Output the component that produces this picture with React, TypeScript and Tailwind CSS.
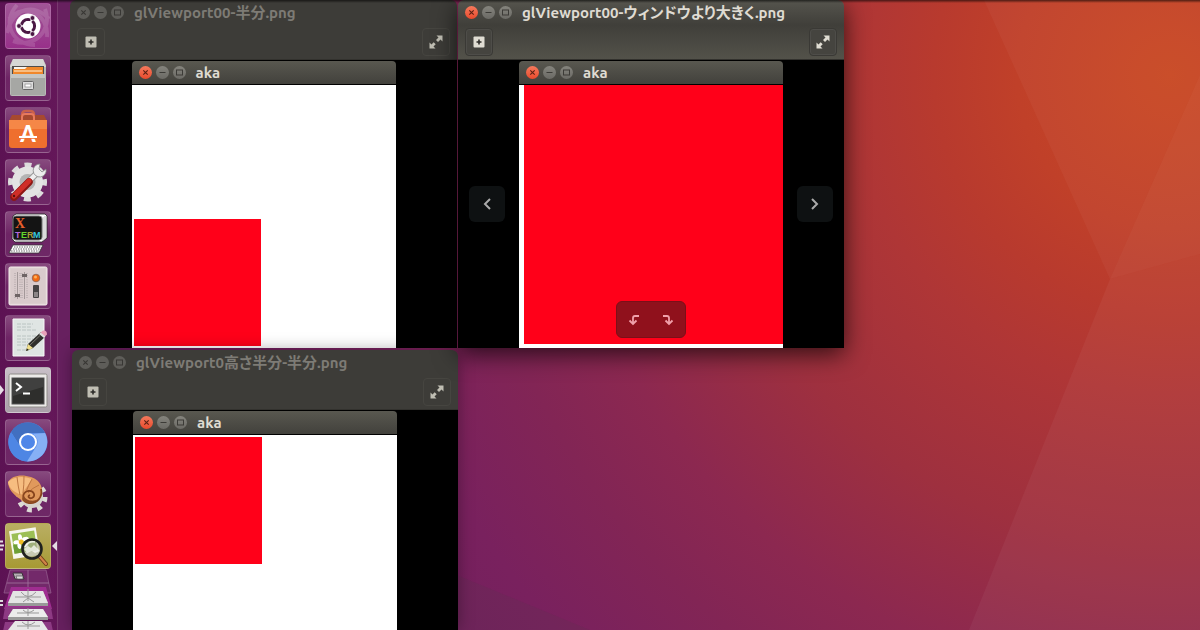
import { ReactNode } from "react";
import clsx from "clsx";

const font =
  "font-['Ubuntu','Noto_Sans','Noto_Sans_CJK_JP',sans-serif]";

const Wallpaper = () => (
  <svg
    className="absolute inset-0 h-full w-full"
    viewBox="0 0 1200 630"
    preserveAspectRatio="none"
    aria-hidden="true"
  >
    <defs>
      <radialGradient id="sky" gradientUnits="userSpaceOnUse" cx="1170" cy="75" r="1180">
        <stop offset="0" stopColor="#c94823" />
        <stop offset="0.13" stopColor="#c04029" />
        <stop offset="0.2" stopColor="#b83a2e" />
        <stop offset="0.27" stopColor="#af3636" />
        <stop offset="0.4" stopColor="#9e303f" />
        <stop offset="0.52" stopColor="#8c2850" />
        <stop offset="0.6" stopColor="#822555" />
        <stop offset="0.7" stopColor="#79215e" />
        <stop offset="1" stopColor="#621c5c" />
      </radialGradient>
    </defs>
    <rect width="1200" height="630" fill="url(#sky)" />
    <path d="M984 0L1110 279L1200 75V0z" fill="#fff" opacity="0.035" />
    <path d="M1200 75L1110 279L1200 254z" fill="#fff" opacity="0.06" />
    <path d="M1110 279L969 630H1200V254z" fill="#fff" opacity="0.045" />
    <path d="M440 568L590 630H440z" fill="#404040" opacity="0.12" />
  </svg>
);

const UbuntuIcon = () => (
  <>
    <path d="M2 30C8 4 30 0 44 16M4 16C20-2 44 12 42 34M12 2C-4 20 8 42 30 42M40 6C48 26 30 46 8 38" fill="none" stroke="#fff" strokeWidth="4" opacity="0.14" />
    <circle cx="23" cy="23" r="12.500" fill="#fff" />
    <circle cx="23" cy="23" r="6.500" fill="none" stroke="#4b1844" strokeWidth="3.200" />
    <path d="M23 23H13M23 23L28.500 32M23 23L28.500 14" stroke="#fff" strokeWidth="1.500" />
    <circle cx="23" cy="23" r="4.900" fill="#fff" />
    <g fill="#4b1844" stroke="#fff" strokeWidth="0.700">
      <circle cx="14" cy="23" r="2.400" />
      <circle cx="27.500" cy="15" r="2.400" />
      <circle cx="27.500" cy="31" r="2.400" />
    </g>
  </>
);

const FilesIcon = () => (
  <>
    <path d="M8 4H38L41 10V39Q41 41 39 41H7Q5 41 5 39V10z" fill="#b9bab7" />
    <path d="M8 4H38L41 12H5z" fill="#d6d7d4" />
    <path d="M7 11H39V19H7z" fill="#4f4d4b" />
    <path d="M9 12H38V15H9z" fill="#f8f4ec" />
    <path d="M8 14H20L22 12H38V19H8z" fill="#f0882b" />
    <path d="M9 16H37" stroke="#fff2d7" />
    <path d="M6 19H40V40H6z" fill="#a6a7a4" />
    <path d="M6 19H40V23H6z" fill="#c5c6c3" />
    <rect x="17.500" y="26.500" width="11" height="8" rx="1" fill="#ddd" stroke="#666" />
    <rect x="20" y="29" width="6" height="3" fill="#fff" stroke="#888" strokeWidth="0.700" />
  </>
);

const SoftwareIcon = () => (
  <>
    <path d="M17 13V8Q17 4 21 4H25Q29 4 29 8V13" fill="none" stroke="#c9604a" strokeWidth="2.600" />
    <path d="M7 8H39L42 14H4z" fill="#a7492f" />
    <path d="M4 13H42V38Q42 41 39 41H7Q4 41 4 38z" fill="#ef6f2e" />
    <path d="M4 13H42V22H4z" fill="#f58747" />
    <path d="M17 13V10Q17 7 20 7H26Q29 7 29 10V13" fill="none" stroke="#e8795d" strokeWidth="2" />
    <text x="23" y="35" textAnchor="middle" fill="#fff" fontSize="22" fontWeight="900" fontFamily="Lato, sans-serif">A</text>
    <path d="M14 30H32" stroke="#fff" strokeWidth="2.200" />
    <path d="M16 31.500H31" stroke="#ef6f2e" strokeWidth="0.800" />
  </>
);

const SettingsIcon = () => (
  <>
    <circle cx="22.500" cy="23" r="17" fill="none" stroke="#dcdcdc" strokeWidth="5" strokeDasharray="7 6.350" strokeDashoffset="3.500" />
    <circle cx="22.500" cy="23" r="11.500" fill="#c4c4c4" stroke="#e3e3e3" strokeWidth="8" />
    <circle cx="22.500" cy="23" r="8" fill="#b4b4b4" />
    <path d="M24 22L32 14" stroke="#999" strokeWidth="6.500" />
    <path d="M24 22L33 13" stroke="#eee" strokeWidth="4.500" />
    <path d="M41 10A6.500 6.500 0 1 1 35 5L34 10L37 13z" fill="#ececec" stroke="#888" strokeWidth="0.800" />
    <path d="M9 38L24 23" stroke="#8d1613" strokeWidth="7.500" strokeLinecap="round" />
    <path d="M9 37L24 22" stroke="#cf2e28" strokeWidth="5" strokeLinecap="round" />
    <circle cx="9" cy="37" r="1.200" fill="#57100e" />
  </>
);

const XtermIcon = () => (
  <>
    <path d="M8 5L11 3H40L42 5V27L37 31H10L7 28z" fill="#fff" stroke="#222" strokeWidth="0.800" />
    <path d="M38 6V30M40 5V28" stroke="#999" strokeWidth="0.700" />
    <rect x="8" y="5" width="29" height="24" rx="3" fill="#141414" stroke="#777" />
    <text x="10" y="17" fill="#e8602c" fontSize="14" fontWeight="700" fontFamily="Liberation Serif, serif">X</text>
    <g fontSize="9" fontWeight="700" fontFamily="Liberation Sans, sans-serif">
      <text x="10" y="27" fill="#b56ade">T</text>
      <text x="16" y="27" fill="#62d62c">E</text>
      <text x="22" y="27" fill="#a5a034">R</text>
      <text x="28" y="27" fill="#32c7de">M</text>
    </g>
    <path d="M8 34H38L34 42H4z" fill="#fff" stroke="#333" strokeWidth="0.800" />
    <path d="M9 36H36M8 38H35M6 40H34" stroke="#555" strokeDasharray="1.500 1" strokeWidth="0.900" />
  </>
);

const MixerIcon = () => (
  <>
    <rect x="4" y="4" width="38" height="38" rx="1.500" fill="#dccfcf" stroke="#f6eeee" />
    <rect x="6" y="6" width="34" height="34" fill="#d9cbcc" />
    <path d="M12.500 9V36M19.500 9V36" stroke="#a39899" />
    <path d="M10 10V35M15 10V35M17 10V35M22 10V35" stroke="#b0a5a6" strokeDasharray="0.700 1.500" strokeWidth="1.500" />
    <rect x="10" y="31" width="5" height="3" fill="#6e6465" />
    <rect x="17" y="11" width="5" height="3" fill="#6e6465" />
    <circle cx="31" cy="15" r="3.800" fill="#f16a12" stroke="#8b6356" strokeWidth="0.800" />
    <circle cx="30.500" cy="14" r="1.500" fill="#ffb15c" />
    <rect x="28" y="22" width="6" height="13" rx="1" fill="#464344" />
    <rect x="29" y="29" width="4" height="5" fill="#8b8586" />
  </>
);

const EditorIcon = () => (
  <>
    <path d="M8 4H39V41H8z" fill="#dfe5e3" stroke="#f8f8f8" />
    <path d="M12 9H28M12 12H26M12 15H32M12 21H31M12 24H28M12 27H23M12 30H24M12 35H21" stroke="#b7bfbe" strokeWidth="0.900" strokeDasharray="4 1" />
    <path d="M21 36L23 29L36 17L41 21L28 33z" fill="#2f302c" />
    <path d="M21 36L23 29L28 33z" fill="#f0df8b" />
    <path d="M21 36L22 33.500L24 35z" fill="#222" />
    <path d="M35 18L38 15.500Q42 15 42 19.500L39.500 22z" fill="#e7a0b8" />
    <path d="M34 19L35.500 17.500L40.500 21.500L39 23z" fill="#ddd" />
    <path d="M25 30L35 20.500" stroke="#77776f" />
  </>
);

const TerminalIcon = () => (
  <>
    <rect x="4" y="7" width="38" height="33" rx="1.500" fill="#ecebe8" stroke="#8f8c88" />
    <rect x="7" y="11" width="32" height="26" fill="#2e2e2c" stroke="#555" />
    <path d="M8 12H38V20L8 29z" fill="#fff" opacity="0.090" />
    <path d="M11 16L16 20L11 24" fill="none" stroke="#fff" strokeWidth="2" />
    <path d="M18 26.500H25" stroke="#fff" strokeWidth="2" />
  </>
);

const ChromiumIcon = () => (
  <>
    <circle cx="23" cy="23" r="19.500" fill="#5c8eea" />
    <path d="M6 13A19.500 19.500 0 0 1 40 14H23A9 9 0 0 0 15 27z" fill="#416fc0" />
    <path d="M6 13A19.500 19.500 0 0 0 22 42.500L30 29A9 9 0 0 1 15 27z" fill="#4e86e4" />
    <path d="M40 14A19.500 19.500 0 0 1 22 42.500L31 28A9 9 0 0 0 28 15z" fill="#86b0f5" />
    <circle cx="23" cy="23" r="9" fill="#fff" />
    <circle cx="23" cy="23" r="7" fill="#4f86e8" />
  </>
);

const ShellIcon = () => (
  <>
    <circle cx="27" cy="26" r="12.500" fill="none" stroke="#dcdad5" strokeWidth="6" strokeDasharray="4.500 5.310" />
    <circle cx="27" cy="26" r="11" fill="#d5d2cc" />
    <path d="M3 11C7 4 17 3 26 6C36 9 40 20 35 27C31 34 20 34 15 28C9 24 3 18 3 11z" fill="#e0995c" />
    <path d="M3 11C9 5 19 5 27 8C24 13 20 18 16 24C9 21 4 17 3 11z" fill="#f6bd80" />
    <path d="M12 6Q13 15 15 24M19 5Q19 14 18 22M27 8Q23 15 21 21M34 14Q27 17 23 22" fill="none" stroke="#b8713c" strokeWidth="0.900" />
    <path d="M36 18C38 26 32 33 24 32C17 31 16 22 23 20C29 19 31 25 27 27C24 28 22 25 25 24" fill="none" stroke="#88451d" strokeWidth="1.800" />
    <path d="M17 28C19 33 29 34 33 28C29 31 21 30 19 25z" fill="#8f4d23" />
  </>
);

const ViewerIcon = () => (
  <>
    <g transform="rotate(-9 20 20)">
      <rect x="6" y="6" width="27" height="28" fill="#f6f6ee" />
      <rect x="8" y="9" width="23" height="20" fill="#9cbf55" />
      <path d="M8 20H31V29H8z" fill="#6e9f37" />
      <g fill="#fff">
        <ellipse cx="16" cy="14" rx="2" ry="3.500" />
        <ellipse cx="21" cy="16" rx="3.500" ry="2" />
        <ellipse cx="12" cy="18" rx="3.500" ry="2" />
        <ellipse cx="20" cy="22" rx="3" ry="2.500" />
        <ellipse cx="14" cy="22" rx="2" ry="3" />
      </g>
      <circle cx="16.500" cy="18.500" r="2.500" fill="#f0bd25" />
    </g>
    <path d="M35 34L41 41" stroke="#6f3c1c" strokeWidth="4" strokeLinecap="round" />
    <path d="M35 34L41 41" stroke="#d08347" strokeWidth="2.200" strokeLinecap="round" />
    <circle cx="27" cy="26" r="9.500" fill="#b3b89a" fillOpacity="0.700" stroke="#20221f" strokeWidth="2.600" />
    <path d="M20 24Q23 18 30 19" fill="none" stroke="#fff" strokeWidth="1.500" opacity="0.800" />
    <path d="M19 26L23 23L26 25L29 22L32 25L35 28L30 30L27 28L22 30z" fill="#fff" opacity="0.700" />
  </>
);

interface LauncherItem {
  name: string;
  icon: ReactNode;
  tile?: string;
  focused?: boolean;
  pips?: number;
}

const items: LauncherItem[] = [
  { name: "Dash", icon: <UbuntuIcon />, tile: "bg-linear-to-b from-[#a05596] to-[#98308a]" },
  { name: "Files", icon: <FilesIcon /> },
  { name: "Software", icon: <SoftwareIcon /> },
  { name: "Settings", icon: <SettingsIcon /> },
  { name: "XTerm", icon: <XtermIcon /> },
  { name: "Mixer", icon: <MixerIcon /> },
  { name: "Text Editor", icon: <EditorIcon /> },
  { name: "Terminal", icon: <TerminalIcon />, tile: "bg-linear-to-b from-[#c8bfc7] to-[#aaa0a9]", pips: 1 },
  { name: "Chromium", icon: <ChromiumIcon /> },
  { name: "Nautilus Shell", icon: <ShellIcon /> },
  { name: "Image Viewer", icon: <ViewerIcon />, tile: "bg-linear-to-b from-[#b9ae62] to-[#a79a33]", pips: 3, focused: true },
];

const FoldedItems = () => (
  <svg className="w-[57px] shrink-0" height="62" viewBox="0 0 57 62" aria-hidden="true">
    <path d="M10 1H46L51 24H4z" fill="#73296a" stroke="#925a8b" strokeWidth="0.800" />
    <path d="M28 1V24M7 14H49" stroke="#a276a0" strokeWidth="0.800" />
    <path d="M13 4H22L24 10H15z" fill="#b5aeb4" stroke="#3b3239" />
    <path d="M16 7H23V10H17z" fill="#ddd" stroke="#555" strokeWidth="0.700" />
    <path d="M11 18H46L52 40H4z" fill="#9f2d90" />
    <path d="M13 22H43L48 34V37H8V34z" fill="#999" />
    <path d="M13 22H43L48 34H8z" fill="#e4e4e4" />
    <path d="M28 20V32M15 28H41M21 23Q28 32 36 23M23 33L28 29L34 33" fill="none" stroke="#999" />
    <path d="M5 38H51L53 50H3z" fill="#8d3a83" />
    <path d="M13 40H43L48 48V51H8V48z" fill="#999" />
    <path d="M13 40H43L48 48H8z" fill="#ececec" />
    <path d="M28 39V47M17 44H39M23 41Q28 46 34 41" fill="none" stroke="#999" />
    <path d="M5 53H51L53 62H3z" fill="#8d3a83" />
    <path d="M15 52H42L48 61V62H8V61z" fill="#e7e7e7" />
    <path d="M28 52V60M17 57H40M22 53Q28 59 35 53" fill="none" stroke="#999" />
    <path d="M0 32H3M0 36H3" stroke="#ddd" strokeWidth="2" />
  </svg>
);

const Launcher = () => (
  <nav className="relative flex w-[57px] shrink-0 flex-col overflow-hidden bg-linear-to-r from-[#5c1253] to-[#641759]">
    <ul className="flex flex-col gap-1.5 pt-[3px]">
      {items.map((item) => (
        <li key={item.name} className="relative flex pl-[5px]">
          {item.pips === 1 && (
            <svg className="absolute top-[18px] left-0" width="4" height="10" aria-hidden="true">
              <path d="M0 0L4 5L0 10z" fill="#e6dce5" />
            </svg>
          )}
          {item.pips === 3 && (
            <svg className="absolute top-[17px] left-0" width="4" height="11" aria-hidden="true">
              <path d="M0 1.500H3M0 5.500H4M0 9.500H3" stroke="#e6dce5" strokeWidth="2.200" />
            </svg>
          )}
          <button
            type="button"
            aria-label={item.name}
            className={clsx(
              "size-[46px] overflow-hidden rounded-sm border border-white/15",
              item.tile ?? "bg-linear-to-b from-[#874a7e] via-[#6e2465] to-[#6e2866]"
            )}
          >
            <svg className="-m-px size-[46px]" viewBox="0 0 46 46" aria-hidden="true">
              {item.icon}
            </svg>
          </button>
          {item.focused && (
            <svg className="absolute top-[18px] right-0" width="5" height="10" aria-hidden="true">
              <path d="M5 0L0 5L5 10z" fill="#e6dce5" />
            </svg>
          )}
        </li>
      ))}
    </ul>
    <FoldedItems />
  </nav>
);

interface ControlsProps {
  active?: boolean;
}

const WindowControls = ({ active }: ControlsProps) => {
  const plain = active
    ? "bg-linear-to-b from-[#85847d] to-[#6b6a65] text-[#3c3b37]"
    : "bg-[#5e5d59] text-[#383734]";

  return (
    <div className="flex gap-1">
      <button
        type="button"
        aria-label="Close"
        className={clsx(
          "size-[13px] rounded-full",
          active ? "bg-linear-to-b from-[#f5795c] to-[#e8492b] text-[#5b2013]" : plain
        )}
      >
        <svg viewBox="0 0 13 13" fill="none" stroke="currentColor" strokeWidth="1.100">
          <path d="M4.300 4.300L8.700 8.700M8.700 4.300L4.300 8.700" />
        </svg>
      </button>
      <button type="button" aria-label="Minimize" className={clsx("size-[13px] rounded-full", plain)}>
        <svg viewBox="0 0 13 13" stroke="currentColor">
          <path d="M3.500 6.500H9.500" />
        </svg>
      </button>
      <button type="button" aria-label="Maximize" className={clsx("size-[13px] rounded-full", plain)}>
        <svg viewBox="0 0 13 13" fill="none" stroke="currentColor">
          <rect x="3.500" y="4" width="6" height="5" />
        </svg>
      </button>
    </div>
  );
};

interface ToolButtonProps {
  label: string;
  active?: boolean;
  children: ReactNode;
}

const ToolButton = ({ label, active, children }: ToolButtonProps) => (
  <button
    type="button"
    aria-label={label}
    className={clsx(
      "flex size-7 items-center justify-center rounded-sm border",
      active
        ? "border-[#3a3935] bg-[#45443f] text-[#e0ddd3] inset-ring inset-ring-white/5"
        : "border-[#464540] text-[#c0beb3]"
    )}
  >
    {children}
  </button>
);

interface ViewerWindowProps {
  title: string;
  active?: boolean;
  className: string;
  picture: ReactNode;
  children?: ReactNode;
}

const ViewerWindow = (props: ViewerWindowProps) => {
  const { title, active, className, picture, children } = props;

  return (
    <section className={clsx("absolute flex flex-col overflow-hidden rounded-t-md", className)}>
      <header
        className={clsx(
          "flex h-[25px] shrink-0 items-center gap-2.5 px-[7px]",
          active ? "bg-linear-to-b from-[#56554e] to-[#403f3a]" : "bg-[#3d3c38]"
        )}
      >
        <WindowControls active={active} />
        <h2
          className={clsx(
            "text-[15px] leading-6 font-semibold whitespace-nowrap [font-feature-settings:'palt']",
            active ? "text-[#dfdbd2]" : "text-[#7d7b75]"
          )}
        >
          {title}
        </h2>
      </header>
      <div
        className={clsx(
          "flex h-[35px] shrink-0 items-center justify-between border-b border-[#33322e] px-[7px]",
          active ? "bg-linear-to-b from-[#403f3a] to-[#53524a]" : "bg-[#3d3c38]"
        )}
      >
        <ToolButton label="Show side pane" active={active}>
          <svg width="12" height="12" viewBox="0 0 12 12">
            <rect x="0.500" y="0.500" width="11" height="11" rx="1" fill="currentColor" />
            <path d="M6 3.500V8.500M3.500 6H8.500" stroke="#2d2c29" strokeWidth="1.600" />
          </svg>
        </ToolButton>
        <ToolButton label="Fullscreen" active={active}>
          <svg width="14" height="14" viewBox="0 0 14 14" fill="currentColor">
            <path d="M7.500 0.500H13.500V6.500L11.500 4.500L9 7L7 5L9.500 2.500z" />
            <path d="M6.500 13.500H0.500V7.500L2.500 9.500L4.700 7.300L6.700 9.300L4.500 11.500z" />
          </svg>
        </ToolButton>
      </div>
      <div className="relative flex min-h-0 grow justify-center bg-black pt-px">
        {picture}
        {children}
      </div>
    </section>
  );
};

interface AkaPictureProps {
  className: string;
  square: string;
}

const AkaPicture = ({ className, square }: AkaPictureProps) => (
  <div className="flex w-[264px] flex-col">
    <div className="flex h-6 shrink-0 items-center gap-2.5 rounded-t-sm border-b border-black bg-linear-to-b from-[#595850] to-[#42413c] px-[7px]">
      <WindowControls active />
      <span className="text-[15px] leading-6 font-semibold text-[#dfdbd2]">aka</span>
    </div>
    <div className={clsx("flex grow bg-white", className)}>
      <div className={clsx("bg-[#ff0019]", square)} />
    </div>
  </div>
);

const navButton =
  "flex size-9 items-center justify-center rounded-md bg-[#0e1112] text-[#aaa]";

const App = () => {
  return (
    <div className={clsx("relative flex h-screen overflow-hidden", font)}>
      <Wallpaper />
      <Launcher />
      <div className="relative w-[13px] shrink-0 border-l border-[#79396f] bg-[#67205f]" />
      <main className="relative grow">
        <ViewerWindow
          title="glViewport00-半分.png"
          className="top-0 left-0 h-[348px] w-[387px]"
          picture={<AkaPicture className="items-end pb-0.5 pl-0.5" square="size-[127px]" />}
        />
        <ViewerWindow
          title="glViewport0高さ半分-半分.png"
          className="top-[350px] bottom-0 left-0.5 w-[386px] shadow-[0_0_16px_rgba(0,0,0,0.35)]"
          picture={<AkaPicture className="items-start pt-0.5 pl-0.5" square="size-[127px]" />}
        />
        <ViewerWindow
          title="glViewport00-ウィンドウより大きく.png"
          active
          className="top-0 left-[388px] h-[348px] w-[386px] shadow-[0_6px_24px_rgba(0,0,0,0.7)]"
          picture={<AkaPicture className="pb-1 pl-[5px]" square="grow" />}
        >
          <div className="absolute inset-0 flex items-center justify-between px-[11px]">
            <button type="button" aria-label="Previous" className={navButton}>
              <svg width="12" height="12" viewBox="0 0 12 12" fill="none" stroke="currentColor" strokeWidth="2">
                <path d="M9 1L4 6L9 11" />
              </svg>
            </button>
            <button type="button" aria-label="Next" className={navButton}>
              <svg width="12" height="12" viewBox="0 0 12 12" fill="none" stroke="currentColor" strokeWidth="2">
                <path d="M3 1L8 6L3 11" />
              </svg>
            </button>
          </div>
          <div className="absolute bottom-2.5 flex h-[37px] w-[70px] rounded-md border border-[#7c0f18] bg-[#90111c] text-[#f0a0aa]">
            <button type="button" aria-label="Rotate left" className="flex grow items-center justify-center">
              <svg width="12" height="12" viewBox="0 0 12 12" fill="none" stroke="currentColor" strokeWidth="1.800">
                <path d="M11 2H7Q5 2 5 4V9M1.500 6.500L5 10L8.500 6.500" />
              </svg>
            </button>
            <button type="button" aria-label="Rotate right" className="flex grow items-center justify-center">
              <svg width="12" height="12" viewBox="0 0 12 12" fill="none" stroke="currentColor" strokeWidth="1.800">
                <path d="M1 2H5Q7 2 7 4V9M3.500 6.500L7 10L10.500 6.500" />
              </svg>
            </button>
          </div>
        </ViewerWindow>
      </main>
      <div className="pointer-events-none absolute inset-x-0 top-0 h-[3px] bg-linear-to-b from-black/60 to-transparent" />
    </div>
  );
};

export default App;
